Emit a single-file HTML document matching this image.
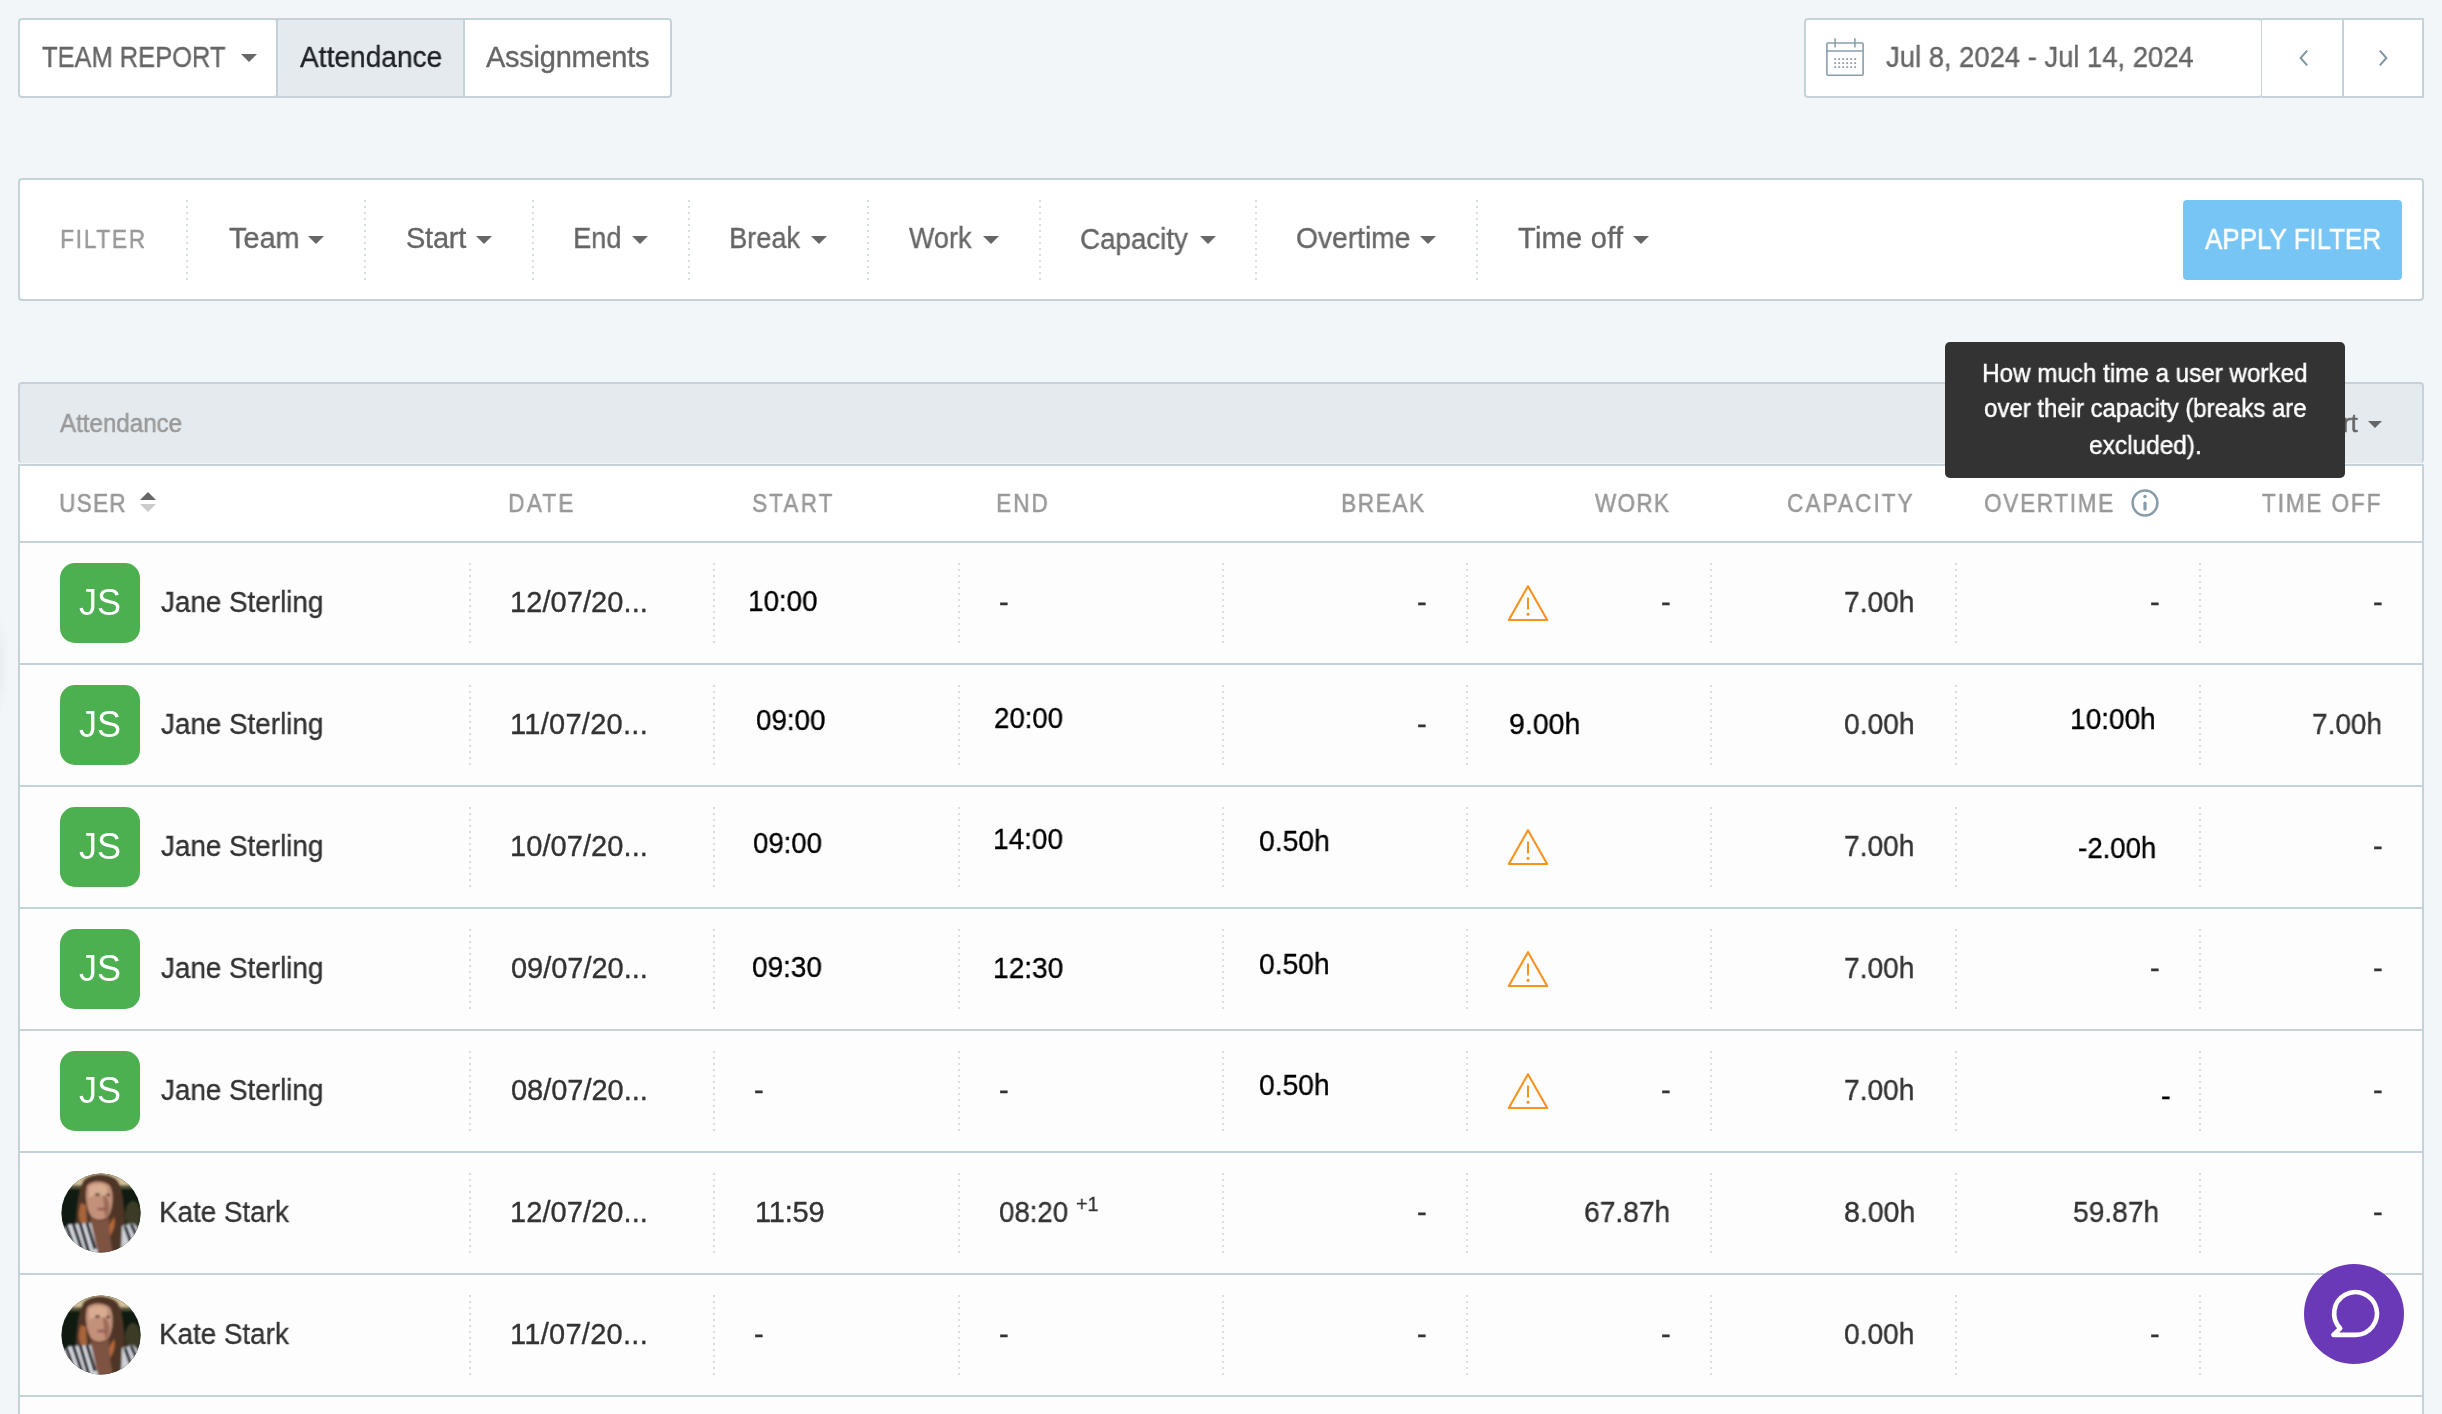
<!DOCTYPE html>
<html><head><meta charset="utf-8"><title>Attendance</title>
<style>
html,body{margin:0;padding:0;}
body{width:2442px;height:1414px;overflow:hidden;position:relative;background:#f2f6f8;font-family:"Liberation Sans",sans-serif;}
@media (max-width:1300px){body{zoom:0.5;}}
.t{position:absolute;white-space:nowrap;line-height:1;z-index:3;will-change:transform;}
.box{position:absolute;box-sizing:border-box;}
.abs{position:absolute;}
.caret{position:absolute;width:0;height:0;z-index:3;}
.dots{position:absolute;width:2px;background:repeating-linear-gradient(to bottom,#d5dee3 0,#d5dee3 2px,transparent 2px,transparent 6px);}
.av{position:absolute;width:80px;height:80px;border-radius:15px;background:#4caf50;color:#fff;font-size:36px;line-height:79px;text-align:center;z-index:3;will-change:transform;}
</style></head><body>
<div class="box" style="left:18px;top:18px;width:260px;height:80px;border:2px solid #c6d2d9;border-radius:4px;background:#fff;"></div>
<div class="box" style="left:276px;top:18px;width:396px;height:80px;border:2px solid #c6d2d9;border-radius:0 4px 4px 0;background:#fff;"></div>
<div class="box" style="left:278px;top:20px;width:187px;height:76px;background:#e4eaee;border-right:2px solid #c6d2d9;"></div>
<div class="caret" style="left:240.5px;top:54px;border-left:8.0px solid transparent;border-right:8.0px solid transparent;border-top:8px solid #666;"></div>
<div class="box" style="left:1804px;top:18px;width:459px;height:80px;border:2px solid #c6d2d9;border-radius:4px;background:#fff;"></div>
<div class="box" style="left:2262px;top:18px;width:82px;height:80px;border:2px solid #c6d2d9;border-left:0;background:#fff;"></div>
<div class="box" style="left:2342px;top:18px;width:82px;height:80px;border:2px solid #c6d2d9;background:#fff;"></div>
<svg class="abs" style="left:0;top:0" width="2442" height="110" viewBox="0 0 2442 110">
<g fill="none" stroke="#8a9eaa" stroke-width="1.6">
<rect x="1826.9" y="43" width="36.2" height="32.2" rx="1"/>
<line x1="1826.9" y1="51" x2="1863.1" y2="51"/>
<line x1="1835.1" y1="38.3" x2="1835.1" y2="47.5"/>
<line x1="1854.9" y1="38.3" x2="1854.9" y2="47.5"/>
</g>
<g fill="#8a9eaa"><rect x="1834.3" y="58.2" width="1.8" height="1.8"/><rect x="1838.3" y="58.2" width="1.8" height="1.8"/><rect x="1842.3" y="58.2" width="1.8" height="1.8"/><rect x="1846.3" y="58.2" width="1.8" height="1.8"/><rect x="1850.3" y="58.2" width="1.8" height="1.8"/><rect x="1854.3" y="58.2" width="1.8" height="1.8"/><rect x="1834.3" y="62.2" width="1.8" height="1.8"/><rect x="1838.3" y="62.2" width="1.8" height="1.8"/><rect x="1842.3" y="62.2" width="1.8" height="1.8"/><rect x="1846.3" y="62.2" width="1.8" height="1.8"/><rect x="1850.3" y="62.2" width="1.8" height="1.8"/><rect x="1854.3" y="62.2" width="1.8" height="1.8"/><rect x="1834.3" y="66.2" width="1.8" height="1.8"/><rect x="1838.3" y="66.2" width="1.8" height="1.8"/><rect x="1842.3" y="66.2" width="1.8" height="1.8"/><rect x="1846.3" y="66.2" width="1.8" height="1.8"/><rect x="1850.3" y="66.2" width="1.8" height="1.8"/><rect x="1854.3" y="66.2" width="1.8" height="1.8"/></g>
<g fill="none" stroke="#7f96a3" stroke-width="2">
<polyline points="2307.2,50.6 2300.6,58 2307.2,65.4"/>
<polyline points="2379.8,50.6 2386.4,58 2379.8,65.4"/>
</g>
</svg>
<div class="box" style="left:18px;top:178px;width:2406px;height:123px;border:2px solid #c6d2d9;border-radius:4px;background:#fff;"></div>
<div class="dots" style="left:186px;top:200px;height:80px"></div>
<div class="dots" style="left:364px;top:200px;height:80px"></div>
<div class="dots" style="left:532px;top:200px;height:80px"></div>
<div class="dots" style="left:688px;top:200px;height:80px"></div>
<div class="dots" style="left:867px;top:200px;height:80px"></div>
<div class="dots" style="left:1039px;top:200px;height:80px"></div>
<div class="dots" style="left:1255px;top:200px;height:80px"></div>
<div class="dots" style="left:1476px;top:200px;height:80px"></div>
<div class="caret" style="left:308px;top:236px;border-left:8.0px solid transparent;border-right:8.0px solid transparent;border-top:8px solid #666;"></div>
<div class="caret" style="left:476px;top:236px;border-left:8.0px solid transparent;border-right:8.0px solid transparent;border-top:8px solid #666;"></div>
<div class="caret" style="left:632px;top:236px;border-left:8.0px solid transparent;border-right:8.0px solid transparent;border-top:8px solid #666;"></div>
<div class="caret" style="left:811px;top:236px;border-left:8.0px solid transparent;border-right:8.0px solid transparent;border-top:8px solid #666;"></div>
<div class="caret" style="left:983px;top:236px;border-left:8.0px solid transparent;border-right:8.0px solid transparent;border-top:8px solid #666;"></div>
<div class="caret" style="left:1199.6px;top:236px;border-left:8.0px solid transparent;border-right:8.0px solid transparent;border-top:8px solid #666;"></div>
<div class="caret" style="left:1420.4px;top:236px;border-left:8.0px solid transparent;border-right:8.0px solid transparent;border-top:8px solid #666;"></div>
<div class="caret" style="left:1633px;top:236px;border-left:8.0px solid transparent;border-right:8.0px solid transparent;border-top:8px solid #666;"></div>
<div class="box" style="left:2183px;top:200px;width:219px;height:80px;background:#76c5f5;border-radius:4px;"></div>
<div class="box" style="left:18px;top:382px;width:2406px;height:81px;border:2px solid #c6d2d9;border-bottom:0;border-radius:4px;background:#e4eaee;"></div>
<div class="caret" style="left:2368px;top:421px;border-left:7.0px solid transparent;border-right:7.0px solid transparent;border-top:7px solid #666;"></div>
<div class="box" style="left:18px;top:464px;width:2406px;height:1000px;border:2px solid #c6d2d9;background:#fdfdfd;"></div>
<div class="box" style="left:20px;top:466px;width:2402px;height:75px;background:#fff;"></div>
<div class="box" style="left:20px;top:541px;width:2402px;height:2px;background:#c6d2d9;"></div>
<div class="box" style="left:20px;top:663px;width:2402px;height:2px;background:#c6d2d9;"></div>
<div class="box" style="left:20px;top:785px;width:2402px;height:2px;background:#c6d2d9;"></div>
<div class="box" style="left:20px;top:907px;width:2402px;height:2px;background:#c6d2d9;"></div>
<div class="box" style="left:20px;top:1029px;width:2402px;height:2px;background:#c6d2d9;"></div>
<div class="box" style="left:20px;top:1151px;width:2402px;height:2px;background:#c6d2d9;"></div>
<div class="box" style="left:20px;top:1273px;width:2402px;height:2px;background:#c6d2d9;"></div>
<div class="box" style="left:20px;top:1395px;width:2402px;height:2px;background:#c6d2d9;"></div>
<div class="caret" style="left:140px;top:492px;border-left:8px solid transparent;border-right:8px solid transparent;border-bottom:8px solid #666;"></div>
<div class="caret" style="left:140px;top:504px;border-left:8px solid transparent;border-right:8px solid transparent;border-top:8px solid #ccc;"></div>
<svg class="abs" style="left:2128px;top:486px" width="34" height="34" viewBox="0 0 34 34">
<circle cx="17" cy="17" r="12.4" fill="none" stroke="#879ba8" stroke-width="2.5"/>
<circle cx="17" cy="10.6" r="1.75" fill="#879ba8"/>
<line x1="17" y1="17.2" x2="17" y2="23" stroke="#879ba8" stroke-width="3.2" stroke-linecap="round"/>
</svg>
<div class="dots" style="left:469px;top:563px;height:80px"></div>
<div class="dots" style="left:713px;top:563px;height:80px"></div>
<div class="dots" style="left:958px;top:563px;height:80px"></div>
<div class="dots" style="left:1222px;top:563px;height:80px"></div>
<div class="dots" style="left:1466px;top:563px;height:80px"></div>
<div class="dots" style="left:1710px;top:563px;height:80px"></div>
<div class="dots" style="left:1955px;top:563px;height:80px"></div>
<div class="dots" style="left:2199px;top:563px;height:80px"></div>
<div class="av" style="left:60px;top:563px">JS</div>
<div class="dots" style="left:469px;top:685px;height:80px"></div>
<div class="dots" style="left:713px;top:685px;height:80px"></div>
<div class="dots" style="left:958px;top:685px;height:80px"></div>
<div class="dots" style="left:1222px;top:685px;height:80px"></div>
<div class="dots" style="left:1466px;top:685px;height:80px"></div>
<div class="dots" style="left:1710px;top:685px;height:80px"></div>
<div class="dots" style="left:1955px;top:685px;height:80px"></div>
<div class="dots" style="left:2199px;top:685px;height:80px"></div>
<div class="av" style="left:60px;top:685px">JS</div>
<div class="dots" style="left:469px;top:807px;height:80px"></div>
<div class="dots" style="left:713px;top:807px;height:80px"></div>
<div class="dots" style="left:958px;top:807px;height:80px"></div>
<div class="dots" style="left:1222px;top:807px;height:80px"></div>
<div class="dots" style="left:1466px;top:807px;height:80px"></div>
<div class="dots" style="left:1710px;top:807px;height:80px"></div>
<div class="dots" style="left:1955px;top:807px;height:80px"></div>
<div class="dots" style="left:2199px;top:807px;height:80px"></div>
<div class="av" style="left:60px;top:807px">JS</div>
<div class="dots" style="left:469px;top:929px;height:80px"></div>
<div class="dots" style="left:713px;top:929px;height:80px"></div>
<div class="dots" style="left:958px;top:929px;height:80px"></div>
<div class="dots" style="left:1222px;top:929px;height:80px"></div>
<div class="dots" style="left:1466px;top:929px;height:80px"></div>
<div class="dots" style="left:1710px;top:929px;height:80px"></div>
<div class="dots" style="left:1955px;top:929px;height:80px"></div>
<div class="dots" style="left:2199px;top:929px;height:80px"></div>
<div class="av" style="left:60px;top:929px">JS</div>
<div class="dots" style="left:469px;top:1051px;height:80px"></div>
<div class="dots" style="left:713px;top:1051px;height:80px"></div>
<div class="dots" style="left:958px;top:1051px;height:80px"></div>
<div class="dots" style="left:1222px;top:1051px;height:80px"></div>
<div class="dots" style="left:1466px;top:1051px;height:80px"></div>
<div class="dots" style="left:1710px;top:1051px;height:80px"></div>
<div class="dots" style="left:1955px;top:1051px;height:80px"></div>
<div class="dots" style="left:2199px;top:1051px;height:80px"></div>
<div class="av" style="left:60px;top:1051px">JS</div>
<div class="dots" style="left:469px;top:1173px;height:80px"></div>
<div class="dots" style="left:713px;top:1173px;height:80px"></div>
<div class="dots" style="left:958px;top:1173px;height:80px"></div>
<div class="dots" style="left:1222px;top:1173px;height:80px"></div>
<div class="dots" style="left:1466px;top:1173px;height:80px"></div>
<div class="dots" style="left:1710px;top:1173px;height:80px"></div>
<div class="dots" style="left:1955px;top:1173px;height:80px"></div>
<div class="dots" style="left:2199px;top:1173px;height:80px"></div>
<div class="dots" style="left:469px;top:1295px;height:80px"></div>
<div class="dots" style="left:713px;top:1295px;height:80px"></div>
<div class="dots" style="left:958px;top:1295px;height:80px"></div>
<div class="dots" style="left:1222px;top:1295px;height:80px"></div>
<div class="dots" style="left:1466px;top:1295px;height:80px"></div>
<div class="dots" style="left:1710px;top:1295px;height:80px"></div>
<div class="dots" style="left:1955px;top:1295px;height:80px"></div>
<div class="dots" style="left:2199px;top:1295px;height:80px"></div>
<svg class="abs" style="left:1504px;top:581px" width="48" height="44" viewBox="0 0 48 44">
<path d="M24 5.2 L43.2 39 L4.8 39 Z" fill="none" stroke="#f7931e" stroke-width="2.1" stroke-linejoin="round"/>
<line x1="24" y1="16.5" x2="24" y2="28.5" stroke="#f7931e" stroke-width="2"/>
<circle cx="24" cy="33.2" r="1.5" fill="#f7931e"/>
</svg>
<svg class="abs" style="left:1504px;top:825px" width="48" height="44" viewBox="0 0 48 44">
<path d="M24 5.2 L43.2 39 L4.8 39 Z" fill="none" stroke="#f7931e" stroke-width="2.1" stroke-linejoin="round"/>
<line x1="24" y1="16.5" x2="24" y2="28.5" stroke="#f7931e" stroke-width="2"/>
<circle cx="24" cy="33.2" r="1.5" fill="#f7931e"/>
</svg>
<svg class="abs" style="left:1504px;top:947px" width="48" height="44" viewBox="0 0 48 44">
<path d="M24 5.2 L43.2 39 L4.8 39 Z" fill="none" stroke="#f7931e" stroke-width="2.1" stroke-linejoin="round"/>
<line x1="24" y1="16.5" x2="24" y2="28.5" stroke="#f7931e" stroke-width="2"/>
<circle cx="24" cy="33.2" r="1.5" fill="#f7931e"/>
</svg>
<svg class="abs" style="left:1504px;top:1069px" width="48" height="44" viewBox="0 0 48 44">
<path d="M24 5.2 L43.2 39 L4.8 39 Z" fill="none" stroke="#f7931e" stroke-width="2.1" stroke-linejoin="round"/>
<line x1="24" y1="16.5" x2="24" y2="28.5" stroke="#f7931e" stroke-width="2"/>
<circle cx="24" cy="33.2" r="1.5" fill="#f7931e"/>
</svg>
<svg class="abs" style="left:61px;top:1173px" width="80" height="80" viewBox="0 0 80 80">
<defs><clipPath id="kc1173"><circle cx="40" cy="40" r="39.6"/></clipPath>
<filter id="kb1173" x="-20%" y="-20%" width="140%" height="140%"><feGaussianBlur stdDeviation="1.1"/></filter></defs>
<g clip-path="url(#kc1173)"><rect width="80" height="80" fill="#0f1a11"/>
<g filter="url(#kb1173)">
<rect x="-5" y="-5" width="90" height="18" fill="#d3bf98"/>
<rect x="-5" y="12" width="90" height="4" fill="#55553a"/>
<ellipse cx="72" cy="42" rx="8" ry="14" fill="#3b3a26"/>
<path d="M22 8 C28 -1 50 -1 57 8 C63 18 63 40 65 58 C67 70 63 78 56 80 L30 80 L24 56 C18 58 14 52 15 44 C16 30 18 16 22 8Z" fill="#4f3526"/>
<path d="M20 30 C17 38 17 48 22 54 L26 50 L25 32Z" fill="#a7653a"/>
<path d="M53 44 C55 50 53 58 48 64 L47 54Z" fill="#b2683a"/>
<path d="M26 13 C30 7 44 7 49 13 C53 20 52 34 48 42 C44 48 34 48 30 43 C25 35 24 21 26 13Z" fill="#c3917a"/>
<path d="M28 14 C33 10 42 10 46 14 L46 24 C40 22 32 22 28 25Z" fill="#d7ac90"/>
<path d="M42 22 C48 24 50 34 47 42 L44 44Z" fill="#9c6c58"/>
<path d="M29 44 C31 54 32 66 30 80 L52 80 C49 66 48 54 48 44 C42 49 35 49 29 44Z" fill="#7d5242"/>
<path d="M-2 58 L8 51 L30 50 L37 80 L-2 80Z" fill="#d9dce2"/>
<path d="M5 52 L15 80 M12 50 L22 80 M19 50 L28 80 M26 50 L34 76" stroke="#0d121c" stroke-width="3.4"/>
<path d="M61 53 L72 50 L80 58 L80 80 L60 80Z" fill="#cfd2d8"/>
<path d="M64 53 L73 78 M70 51 L80 72" stroke="#0d121c" stroke-width="3.2"/>
<ellipse cx="36.5" cy="21.5" rx="2.6" ry="1.2" fill="#4b3a38"/>
<ellipse cx="47" cy="22" rx="2.2" ry="1.2" fill="#4b3a38"/>
<ellipse cx="41" cy="36" rx="5" ry="1.6" fill="#9a5d55"/>
</g></g></svg>
<svg class="abs" style="left:61px;top:1295px" width="80" height="80" viewBox="0 0 80 80">
<defs><clipPath id="kc1295"><circle cx="40" cy="40" r="39.6"/></clipPath>
<filter id="kb1295" x="-20%" y="-20%" width="140%" height="140%"><feGaussianBlur stdDeviation="1.1"/></filter></defs>
<g clip-path="url(#kc1295)"><rect width="80" height="80" fill="#0f1a11"/>
<g filter="url(#kb1295)">
<rect x="-5" y="-5" width="90" height="18" fill="#d3bf98"/>
<rect x="-5" y="12" width="90" height="4" fill="#55553a"/>
<ellipse cx="72" cy="42" rx="8" ry="14" fill="#3b3a26"/>
<path d="M22 8 C28 -1 50 -1 57 8 C63 18 63 40 65 58 C67 70 63 78 56 80 L30 80 L24 56 C18 58 14 52 15 44 C16 30 18 16 22 8Z" fill="#4f3526"/>
<path d="M20 30 C17 38 17 48 22 54 L26 50 L25 32Z" fill="#a7653a"/>
<path d="M53 44 C55 50 53 58 48 64 L47 54Z" fill="#b2683a"/>
<path d="M26 13 C30 7 44 7 49 13 C53 20 52 34 48 42 C44 48 34 48 30 43 C25 35 24 21 26 13Z" fill="#c3917a"/>
<path d="M28 14 C33 10 42 10 46 14 L46 24 C40 22 32 22 28 25Z" fill="#d7ac90"/>
<path d="M42 22 C48 24 50 34 47 42 L44 44Z" fill="#9c6c58"/>
<path d="M29 44 C31 54 32 66 30 80 L52 80 C49 66 48 54 48 44 C42 49 35 49 29 44Z" fill="#7d5242"/>
<path d="M-2 58 L8 51 L30 50 L37 80 L-2 80Z" fill="#d9dce2"/>
<path d="M5 52 L15 80 M12 50 L22 80 M19 50 L28 80 M26 50 L34 76" stroke="#0d121c" stroke-width="3.4"/>
<path d="M61 53 L72 50 L80 58 L80 80 L60 80Z" fill="#cfd2d8"/>
<path d="M64 53 L73 78 M70 51 L80 72" stroke="#0d121c" stroke-width="3.2"/>
<ellipse cx="36.5" cy="21.5" rx="2.6" ry="1.2" fill="#4b3a38"/>
<ellipse cx="47" cy="22" rx="2.2" ry="1.2" fill="#4b3a38"/>
<ellipse cx="41" cy="36" rx="5" ry="1.6" fill="#9a5d55"/>
</g></g></svg>
<div class="box" style="left:1945px;top:342px;width:400px;height:136px;background:#333;border-radius:5px;z-index:5;"></div>
<svg class="abs" style="left:2300px;top:1260px;z-index:7" width="110" height="110" viewBox="2300 1260 110 110">
<circle cx="2354" cy="1314" r="50" fill="#6a39b7"/>
<path d="M2355.5 1334.9 A21.4 21.4 0 1 0 2340.2 1328.4 L2333.4 1334.9 Z" fill="none" stroke="#fff" stroke-width="4.6" stroke-linejoin="round"/>
</svg>
<div class="abs" style="left:-40px;top:600px;width:50px;height:130px;border-radius:50%;background:radial-gradient(closest-side, rgba(150,160,170,0.25), rgba(150,160,170,0));"></div>
<div id="t_team" class="t" style="left:41.97px;top:43.45px;font-size:29px;color:#666;transform:scaleX(0.8783);transform-origin:-0.37px 0;-webkit-text-stroke:0.35px #666;">TEAM REPORT</div>
<div id="t_att" class="t" style="left:299.97px;top:43.45px;font-size:29px;color:#1f2327;transform:scaleX(0.9698);transform-origin:-0.37px 0;-webkit-text-stroke:0.35px #1f2327;">Attendance</div>
<div id="t_asg" class="t" style="left:485.97px;top:43.45px;font-size:29px;color:#666;letter-spacing:-0.250px;-webkit-text-stroke:0.35px #666;">Assignments</div>
<div id="t_date" class="t" style="left:1885.97px;top:43.15px;font-size:29px;color:#666;transform:scaleX(0.9444);transform-origin:1.03px 0;-webkit-text-stroke:0.35px #666;">Jul 8, 2024 - Jul 14, 2024</div>
<div id="f_filter" class="t" style="left:60.25px;top:226.84px;font-size:25px;color:#999;letter-spacing:2.010px;transform:scaleX(0.9000);transform-origin:1.95px 0;-webkit-text-stroke:0.5px #999;">FILTER</div>
<div id="f_team" class="t" style="left:228.97px;top:224.45px;font-size:29px;color:#666;transform:scaleX(0.9946);transform-origin:-0.47px 0;-webkit-text-stroke:0.35px #666;">Team</div>
<div id="f_start" class="t" style="left:405.97px;top:224.45px;font-size:29px;color:#666;letter-spacing:-0.250px;-webkit-text-stroke:0.35px #666;">Start</div>
<div id="f_end" class="t" style="left:572.97px;top:224.45px;font-size:29px;color:#666;transform:scaleX(0.9357);transform-origin:2.33px 0;-webkit-text-stroke:0.35px #666;">End</div>
<div id="f_break" class="t" style="left:728.97px;top:224.45px;font-size:29px;color:#666;transform:scaleX(0.9353);transform-origin:2.03px 0;-webkit-text-stroke:0.35px #666;">Break</div>
<div id="f_work" class="t" style="left:908.97px;top:224.45px;font-size:29px;color:#666;transform:scaleX(0.9300);transform-origin:0.03px 0;-webkit-text-stroke:0.35px #666;">Work</div>
<div id="f_cap" class="t" style="left:1079.97px;top:224.75px;font-size:29px;color:#666;transform:scaleX(0.9563);transform-origin:0.93px 0;-webkit-text-stroke:0.35px #666;">Capacity</div>
<div id="f_ot" class="t" style="left:1295.97px;top:224.45px;font-size:29px;color:#666;transform:scaleX(0.9722);transform-origin:1.03px 0;-webkit-text-stroke:0.35px #666;">Overtime</div>
<div id="f_to" class="t" style="left:1517.97px;top:224.45px;font-size:29px;color:#666;letter-spacing:0.269px;-webkit-text-stroke:0.35px #666;">Time off</div>
<div id="f_apply" class="t" style="left:2204.97px;top:225.45px;font-size:29px;color:#fff;transform:scaleX(0.8950);transform-origin:0.63px 0;-webkit-text-stroke:0.5px #fff;">APPLY FILTER</div>
<div id="h_att" class="t" style="left:60.25px;top:410.84px;font-size:25px;color:#999;transform:scaleX(0.9650);transform-origin:0.15px 0;-webkit-text-stroke:0.5px #999;">Attendance</div>
<div id="h_export" class="t" style="left:2286.25px;top:410.84px;font-size:25px;color:#666;letter-spacing:-0.120px;-webkit-text-stroke:0.5px #666;">Export</div>
<div id="c_user" class="t" style="left:59.25px;top:490.84px;font-size:25px;color:#999;letter-spacing:1.482px;transform:scaleX(0.9000);transform-origin:1.55px 0;-webkit-text-stroke:0.5px #999;">USER</div>
<div id="c_date" class="t" style="left:508.25px;top:490.84px;font-size:25px;color:#999;letter-spacing:2.571px;transform:scaleX(0.9000);transform-origin:1.85px 0;-webkit-text-stroke:0.5px #999;">DATE</div>
<div id="c_start" class="t" style="left:752.25px;top:490.84px;font-size:25px;color:#999;letter-spacing:2.384px;transform:scaleX(0.9000);transform-origin:1.15px 0;-webkit-text-stroke:0.5px #999;">START</div>
<div id="c_end" class="t" style="left:996.25px;top:490.84px;font-size:25px;color:#999;letter-spacing:2.222px;transform:scaleX(0.9000);transform-origin:1.75px 0;-webkit-text-stroke:0.5px #999;">END</div>
<div id="c_break" class="t" style="left:1341.25px;top:490.84px;font-size:25px;color:#999;letter-spacing:1.884px;transform:scaleX(0.9000);transform-origin:1.55px 0;-webkit-text-stroke:0.5px #999;">BREAK</div>
<div id="c_work" class="t" style="left:1595.25px;top:490.84px;font-size:25px;color:#999;letter-spacing:1.482px;transform:scaleX(0.9000);transform-origin:0.15px 0;-webkit-text-stroke:0.5px #999;">WORK</div>
<div id="c_cap" class="t" style="left:1787.25px;top:490.84px;font-size:25px;color:#999;letter-spacing:2.326px;transform:scaleX(0.9000);transform-origin:0.95px 0;-webkit-text-stroke:0.5px #999;">CAPACITY</div>
<div id="c_ot" class="t" style="left:1984.25px;top:490.84px;font-size:25px;color:#999;letter-spacing:1.894px;transform:scaleX(0.9000);transform-origin:1.15px 0;-webkit-text-stroke:0.5px #999;">OVERTIME</div>
<div id="c_to" class="t" style="left:2262.25px;top:490.84px;font-size:25px;color:#999;letter-spacing:2.107px;transform:scaleX(0.9000);transform-origin:-0.05px 0;-webkit-text-stroke:0.5px #999;">TIME OFF</div>
<div id="r0_name" class="t" style="left:160.97px;top:588.45px;font-size:29px;color:#333;transform:scaleX(0.9589);transform-origin:-0.27px 0;-webkit-text-stroke:0.35px #333;">Jane Sterling</div>
<div id="r0_date" class="t" style="left:509.97px;top:588.45px;font-size:29px;color:#333;letter-spacing:0.080px;-webkit-text-stroke:0.35px #333;">12/07/20...</div>
<div id="r1_name" class="t" style="left:160.97px;top:710.45px;font-size:29px;color:#333;transform:scaleX(0.9589);transform-origin:-0.27px 0;-webkit-text-stroke:0.35px #333;">Jane Sterling</div>
<div id="r1_date" class="t" style="left:509.97px;top:710.45px;font-size:29px;color:#333;letter-spacing:0.280px;-webkit-text-stroke:0.35px #333;">11/07/20...</div>
<div id="r2_name" class="t" style="left:160.97px;top:832.45px;font-size:29px;color:#333;transform:scaleX(0.9589);transform-origin:-0.27px 0;-webkit-text-stroke:0.35px #333;">Jane Sterling</div>
<div id="r2_date" class="t" style="left:509.97px;top:832.45px;font-size:29px;color:#333;letter-spacing:0.080px;-webkit-text-stroke:0.35px #333;">10/07/20...</div>
<div id="r3_name" class="t" style="left:160.97px;top:954.45px;font-size:29px;color:#333;transform:scaleX(0.9589);transform-origin:-0.27px 0;-webkit-text-stroke:0.35px #333;">Jane Sterling</div>
<div id="r3_date" class="t" style="left:510.97px;top:954.45px;font-size:29px;color:#333;letter-spacing:-0.020px;-webkit-text-stroke:0.35px #333;">09/07/20...</div>
<div id="r4_name" class="t" style="left:160.97px;top:1076.45px;font-size:29px;color:#333;transform:scaleX(0.9589);transform-origin:-0.27px 0;-webkit-text-stroke:0.35px #333;">Jane Sterling</div>
<div id="r4_date" class="t" style="left:510.97px;top:1076.45px;font-size:29px;color:#333;letter-spacing:-0.020px;-webkit-text-stroke:0.35px #333;">08/07/20...</div>
<div id="r5_name" class="t" style="left:158.97px;top:1198.45px;font-size:29px;color:#333;transform:scaleX(0.9579);transform-origin:1.73px 0;-webkit-text-stroke:0.35px #333;">Kate Stark</div>
<div id="r5_date" class="t" style="left:509.97px;top:1198.45px;font-size:29px;color:#333;letter-spacing:0.080px;-webkit-text-stroke:0.35px #333;">12/07/20...</div>
<div id="r6_name" class="t" style="left:158.97px;top:1320.45px;font-size:29px;color:#333;transform:scaleX(0.9579);transform-origin:1.73px 0;-webkit-text-stroke:0.35px #333;">Kate Stark</div>
<div id="r6_date" class="t" style="left:509.97px;top:1320.45px;font-size:29px;color:#333;letter-spacing:0.280px;-webkit-text-stroke:0.35px #333;">11/07/20...</div>
<div id="r0_start" class="t" style="left:747.97px;top:587.45px;font-size:29px;color:#000;transform:scaleX(0.9556);transform-origin:2.43px 0;-webkit-text-stroke:0.35px #000;">10:00</div>
<div id="r0_end" class="t" style="left:998.56px;top:588.45px;font-size:29px;color:#333;-webkit-text-stroke:0.35px #333;">-</div>
<div id="r0_break" class="t" style="left:1417.26px;top:588.45px;font-size:29px;color:#333;-webkit-text-stroke:0.35px #333;">-</div>
<div id="r0_work" class="t" style="left:1661.36px;top:588.45px;font-size:29px;color:#333;-webkit-text-stroke:0.35px #333;">-</div>
<div id="r0_cap" class="t" style="left:1843.97px;top:588.45px;font-size:29px;color:#333;transform:scaleX(0.9688);transform-origin:1.03px 0;-webkit-text-stroke:0.35px #333;">7.00h</div>
<div id="r0_ot" class="t" style="left:2150.16px;top:588.45px;font-size:29px;color:#333;-webkit-text-stroke:0.35px #333;">-</div>
<div id="r0_to" class="t" style="left:2373.16px;top:588.45px;font-size:29px;color:#333;-webkit-text-stroke:0.35px #333;">-</div>
<div id="r1_start" class="t" style="left:755.97px;top:706.45px;font-size:29px;color:#000;transform:scaleX(0.9564);transform-origin:0.53px 0;-webkit-text-stroke:0.35px #000;">09:00</div>
<div id="r1_end" class="t" style="left:993.97px;top:704.45px;font-size:29px;color:#000;transform:scaleX(0.9494);transform-origin:1.43px 0;-webkit-text-stroke:0.35px #000;">20:00</div>
<div id="r1_break" class="t" style="left:1417.26px;top:710.45px;font-size:29px;color:#333;-webkit-text-stroke:0.35px #333;">-</div>
<div id="r1_work" class="t" style="left:1508.97px;top:710.45px;font-size:29px;color:#000;transform:scaleX(0.9817);transform-origin:1.23px 0;-webkit-text-stroke:0.35px #000;">9.00h</div>
<div id="r1_cap" class="t" style="left:1843.97px;top:710.45px;font-size:29px;color:#333;transform:scaleX(0.9714);transform-origin:1.03px 0;-webkit-text-stroke:0.35px #333;">0.00h</div>
<div id="r1_ot" class="t" style="left:2069.97px;top:705.45px;font-size:29px;color:#000;transform:scaleX(0.9647);transform-origin:2.43px 0;-webkit-text-stroke:0.35px #000;">10:00h</div>
<div id="r1_to" class="t" style="left:2311.97px;top:710.45px;font-size:29px;color:#333;transform:scaleX(0.9630);transform-origin:0.93px 0;-webkit-text-stroke:0.35px #333;">7.00h</div>
<div id="r2_start" class="t" style="left:752.97px;top:829.45px;font-size:29px;color:#000;transform:scaleX(0.9494);transform-origin:0.83px 0;-webkit-text-stroke:0.35px #000;">09:00</div>
<div id="r2_end" class="t" style="left:992.97px;top:825.45px;font-size:29px;color:#000;transform:scaleX(0.9630);transform-origin:2.43px 0;-webkit-text-stroke:0.35px #000;">14:00</div>
<div id="r2_break" class="t" style="left:1258.97px;top:827.45px;font-size:29px;color:#000;transform:scaleX(0.9746);transform-origin:1.23px 0;-webkit-text-stroke:0.35px #000;">0.50h</div>
<div id="r2_cap" class="t" style="left:1843.97px;top:832.45px;font-size:29px;color:#333;transform:scaleX(0.9688);transform-origin:1.03px 0;-webkit-text-stroke:0.35px #333;">7.00h</div>
<div id="r2_ot" class="t" style="left:2077.97px;top:834.45px;font-size:29px;color:#000;transform:scaleX(0.9513);transform-origin:1.43px 0;-webkit-text-stroke:0.35px #000;">-2.00h</div>
<div id="r2_to" class="t" style="left:2373.16px;top:832.45px;font-size:29px;color:#333;-webkit-text-stroke:0.35px #333;">-</div>
<div id="r3_start" class="t" style="left:751.97px;top:953.45px;font-size:29px;color:#000;transform:scaleX(0.9622);transform-origin:1.33px 0;-webkit-text-stroke:0.35px #000;">09:30</div>
<div id="r3_end" class="t" style="left:992.97px;top:954.45px;font-size:29px;color:#000;transform:scaleX(0.9672);transform-origin:1.93px 0;-webkit-text-stroke:0.35px #000;">12:30</div>
<div id="r3_break" class="t" style="left:1258.97px;top:950.45px;font-size:29px;color:#000;transform:scaleX(0.9714);transform-origin:1.03px 0;-webkit-text-stroke:0.35px #000;">0.50h</div>
<div id="r3_cap" class="t" style="left:1843.97px;top:954.45px;font-size:29px;color:#333;transform:scaleX(0.9688);transform-origin:1.03px 0;-webkit-text-stroke:0.35px #333;">7.00h</div>
<div id="r3_ot" class="t" style="left:2150.16px;top:954.45px;font-size:29px;color:#333;-webkit-text-stroke:0.35px #333;">-</div>
<div id="r3_to" class="t" style="left:2373.16px;top:954.45px;font-size:29px;color:#333;-webkit-text-stroke:0.35px #333;">-</div>
<div id="r4_start" class="t" style="left:753.56px;top:1076.45px;font-size:29px;color:#333;-webkit-text-stroke:0.35px #333;">-</div>
<div id="r4_end" class="t" style="left:998.66px;top:1076.45px;font-size:29px;color:#333;-webkit-text-stroke:0.35px #333;">-</div>
<div id="r4_break" class="t" style="left:1258.97px;top:1071.45px;font-size:29px;color:#000;transform:scaleX(0.9714);transform-origin:1.03px 0;-webkit-text-stroke:0.35px #000;">0.50h</div>
<div id="r4_work" class="t" style="left:1661.06px;top:1076.45px;font-size:29px;color:#333;-webkit-text-stroke:0.35px #333;">-</div>
<div id="r4_cap" class="t" style="left:1843.97px;top:1076.45px;font-size:29px;color:#333;transform:scaleX(0.9688);transform-origin:1.03px 0;-webkit-text-stroke:0.35px #333;">7.00h</div>
<div id="r4_ot" class="t" style="left:2161.11px;top:1082.15px;font-size:29px;color:#000;-webkit-text-stroke:0.35px #000;">-</div>
<div id="r4_to" class="t" style="left:2373.16px;top:1076.45px;font-size:29px;color:#333;-webkit-text-stroke:0.35px #333;">-</div>
<div id="r5_start" class="t" style="left:754.97px;top:1198.45px;font-size:29px;color:#333;letter-spacing:-0.225px;-webkit-text-stroke:0.35px #333;">11:59</div>
<div id="r5_end" class="t" style="left:998.97px;top:1198.45px;font-size:29px;color:#333;transform:scaleX(0.9511);transform-origin:1.33px 0;-webkit-text-stroke:0.35px #333;">08:20</div>
<div id="r5_sup" class="t" style="left:1075.53px;top:1193.22px;font-size:21px;color:#333;transform:scaleX(0.9388);transform-origin:0.87px 0;-webkit-text-stroke:0.3px #333;">+1</div>
<div id="r5_break" class="t" style="left:1417.26px;top:1198.45px;font-size:29px;color:#333;-webkit-text-stroke:0.35px #333;">-</div>
<div id="r5_work" class="t" style="left:1583.97px;top:1198.45px;font-size:29px;color:#333;transform:scaleX(0.9709);transform-origin:1.43px 0;-webkit-text-stroke:0.35px #333;">67.87h</div>
<div id="r5_cap" class="t" style="left:1843.97px;top:1198.45px;font-size:29px;color:#333;transform:scaleX(0.9817);transform-origin:1.23px 0;-webkit-text-stroke:0.35px #333;">8.00h</div>
<div id="r5_ot" class="t" style="left:2072.97px;top:1198.45px;font-size:29px;color:#333;transform:scaleX(0.9709);transform-origin:0.83px 0;-webkit-text-stroke:0.35px #333;">59.87h</div>
<div id="r5_to" class="t" style="left:2373.16px;top:1198.45px;font-size:29px;color:#333;-webkit-text-stroke:0.35px #333;">-</div>
<div id="r6_start" class="t" style="left:753.56px;top:1320.45px;font-size:29px;color:#333;-webkit-text-stroke:0.35px #333;">-</div>
<div id="r6_end" class="t" style="left:998.66px;top:1320.45px;font-size:29px;color:#333;-webkit-text-stroke:0.35px #333;">-</div>
<div id="r6_break" class="t" style="left:1417.26px;top:1320.45px;font-size:29px;color:#333;-webkit-text-stroke:0.35px #333;">-</div>
<div id="r6_work" class="t" style="left:1661.06px;top:1320.45px;font-size:29px;color:#333;-webkit-text-stroke:0.35px #333;">-</div>
<div id="r6_cap" class="t" style="left:1843.97px;top:1320.45px;font-size:29px;color:#333;transform:scaleX(0.9688);transform-origin:1.03px 0;-webkit-text-stroke:0.35px #333;">0.00h</div>
<div id="r6_ot" class="t" style="left:2150.16px;top:1320.45px;font-size:29px;color:#333;-webkit-text-stroke:0.35px #333;">-</div>
<div id="r6_to" class="t" style="left:2373.16px;top:1320.45px;font-size:29px;color:#333;-webkit-text-stroke:0.35px #333;">-</div>
<div id="tt1" class="t" style="left:1982.18px;top:359.99px;font-size:26px;color:#fff;transform:scaleX(0.9304);transform-origin:1.72px 0;-webkit-text-stroke:0.45px #fff; z-index:6;">How much time a user worked</div>
<div id="tt2" class="t" style="left:1984.18px;top:395.39px;font-size:26px;color:#fff;transform:scaleX(0.9222);transform-origin:0.82px 0;-webkit-text-stroke:0.45px #fff; z-index:6;">over their capacity (breaks are</div>
<div id="tt3" class="t" style="left:2089.18px;top:431.59px;font-size:26px;color:#fff;transform:scaleX(0.9397);transform-origin:0.82px 0;-webkit-text-stroke:0.45px #fff; z-index:6;">excluded).</div>
</body></html>
